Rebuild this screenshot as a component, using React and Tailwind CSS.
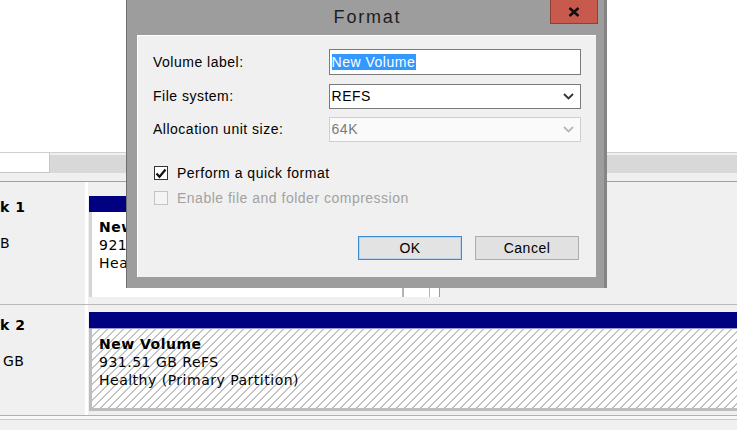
import React from 'react';

const hatch =
  'bg-[repeating-linear-gradient(135deg,#ffffff_0px,#ffffff_4.4px,#c4c4c4_4.4px,#c4c4c4_5.66px)]';

function Chevron({ color }) {
  return (
    <svg width="11" height="7" viewBox="0 0 11 7" className="mr-[6px]">
      <polyline points="1,1 5.5,5.5 10,1" fill="none" stroke={color} strokeWidth="1.8" />
    </svg>
  );
}

function Check({ checked, disabled }) {
  return (
    <div
      className={`w-[14px] h-[14px] flex items-center justify-center border ${
        disabled ? 'border-[#c4c4c4] bg-[#f4f4f4]' : 'border-[#333333] bg-white'
      }`}
    >
      {checked && (
        <svg width="12" height="11" viewBox="0 0 12 11">
          <path d="M1.5 5.5 L4.5 8.8 L10.5 1.5" fill="none" stroke="#111" strokeWidth="2.2" />
        </svg>
      )}
    </div>
  );
}

function FormatDialog() {
  return (
    <div className="absolute left-[126px] top-0 w-[481px] h-[288px] bg-[#9d9d9d] border-l border-r-[3px] border-l-[#6e6e6e] border-r-[#858585] flex flex-col">
      {/* Title bar */}
      <div className="relative h-[35px] flex items-center justify-center">
        <span className="text-[18px] tracking-[1.8px] text-[#1e1e1e] pl-[4px]">Format</span>
        <div className="absolute left-[423px] top-0 w-[48px] h-[24px] bg-[#c75a4d] border border-t-0 border-[#8f4035] flex items-center justify-center">
          <svg width="12" height="10" viewBox="0 0 12 10">
            <path d="M1.5 1 L10.5 9 M10.5 1 L1.5 9" stroke="#111" strokeWidth="2.6" />
          </svg>
        </div>
      </div>

      {/* Client area */}
      <div className="ml-[10px] mr-[8px] h-[242px] bg-[#f0f0f0] border-t border-l border-white flex flex-col px-[15px] text-[14px] tracking-[0.5px] text-black">
        <div className="mt-[13px] flex items-center h-[26px]">
          <div className="w-[176px]">Volume label:</div>
          <div className="w-[253px] h-[26px] bg-white border border-[#7a7a7a] flex items-center pl-[2px]">
            <span className="bg-[#3399ff] text-white leading-[16px] pr-[1px]">New Volume</span>
          </div>
        </div>
        <div className="mt-[9px] flex items-center h-[25px]">
          <div className="w-[176px]">File system:</div>
          <div className="w-[253px] h-[25px] bg-white border border-[#7a7a7a] flex items-center justify-between pl-[2px]">
            <span>REFS</span>
            <Chevron color="#333" />
          </div>
        </div>
        <div className="mt-[8px] flex items-center h-[25px]">
          <div className="w-[176px]">Allocation unit size:</div>
          <div className="w-[253px] h-[25px] bg-[#fafafa] border border-[#cfcfcf] flex items-center justify-between pl-[2px] text-[#7a7a7a]">
            <span>64K</span>
            <Chevron color="#b8b8b8" />
          </div>
        </div>

        <div className="mt-[24px] flex items-center gap-[9px] pl-[1px] h-[14px]">
          <Check checked />
          <span>Perform a quick format</span>
        </div>
        <div className="mt-[11px] flex items-center gap-[9px] pl-[1px] h-[14px] text-[#a2a2a2]">
          <Check disabled />
          <span>Enable file and folder compression</span>
        </div>

        <div className="mt-[31px] flex justify-end gap-[13px] pr-[2px]">
          <div className="w-[104px] h-[24px] bg-[#e3e3e3] border border-[#3c8ad0] shadow-[inset_0_0_0_1px_#b9d4ee] flex items-center justify-center">
            OK
          </div>
          <div className="w-[104px] h-[24px] bg-[#e1e1e1] border border-[#adadad] flex items-center justify-center">
            Cancel
          </div>
        </div>
      </div>
    </div>
  );
}

export default function App() {
  return (
    <div
      className="relative w-[737px] h-[430px] overflow-hidden bg-[#f0f0f0]"
      style={{ fontFamily: '"Liberation Sans", Arial, sans-serif' }}
    >
      {/* Top list area */}
      <div className="h-[152px] bg-white" />
      <div className="h-px bg-[#d0d0d0]" />
      <div className="flex h-[20px]">
        <div className="w-[50px] bg-white border-r border-b border-[#c6c6c6]" />
        <div className="flex-1 bg-[#d8d8d8] mt-[2px]" />
      </div>
      <div className="h-[8px] bg-[#f0f0f0]" />
      <div className="h-px bg-[#a0a0a0]" />

      <div
        className="text-[14px] tracking-[0.5px] text-black leading-[18px]"
        style={{ fontFamily: '"DejaVu Sans", Verdana, sans-serif' }}
      >
        {/* Disk 1 row */}
        <div className="flex h-[122px]">
          <div className="w-[88px] border-r-[3px] border-r-white flex flex-col pt-[16px] overflow-hidden">
            <div className="font-bold whitespace-nowrap">k 1</div>
            <div className="mt-[18px] whitespace-nowrap">B</div>
          </div>
          <div className="w-[352px] flex flex-col pt-[14px] pl-[1px]">
            <div className="h-[16px] bg-[#000080]" />
            <div className="flex-1 mb-[7px] bg-white border-l-[3px] border-r border-[#d4d4d4] border-r-[#9a9a9a] pl-[7px] pt-[6px] relative">
              <div className="font-bold whitespace-nowrap">New Volume</div>
              <div className="whitespace-nowrap">921.51 GB ReFS</div>
              <div className="whitespace-nowrap">Healthy (Primary Partition)</div>
              <div className="absolute left-[310px] bottom-0 w-[28px] h-[14px] border-l-2 border-r border-[#b4b4b4]" />
            </div>
          </div>
        </div>
        <div className="h-px bg-[#b8b8b8]" />

        {/* Disk 2 row */}
        <div className="flex h-[110px]">
          <div className="w-[88px] border-r-[3px] border-r-white flex flex-col pt-[11px] overflow-hidden">
            <div className="font-bold whitespace-nowrap">k 2</div>
            <div className="mt-[18px] pl-[3px] whitespace-nowrap">GB</div>
          </div>
          <div className="flex-1 flex flex-col pt-[7px] pl-[1px]">
            <div className="h-[17px] bg-[#000080] border-b border-[#9a9ad0]" />
            <div className={`flex-1 mb-[4px] ${hatch} border-l-[3px] border-b-[3px] border-[#bdbdbd] pl-[7px] pt-[6px]`}>
              <div className="font-bold whitespace-nowrap">New Volume</div>
              <div className="whitespace-nowrap">931.51 GB ReFS</div>
              <div className="whitespace-nowrap">Healthy (Primary Partition)</div>
            </div>
          </div>
        </div>
        <div className="h-px bg-[#b0b0b0]" />
        <div className="h-[3px] bg-[#f8f8f8]" />
        <div className="h-px bg-[#c8c8c8]" />
      </div>

      <FormatDialog />
    </div>
  );
}
